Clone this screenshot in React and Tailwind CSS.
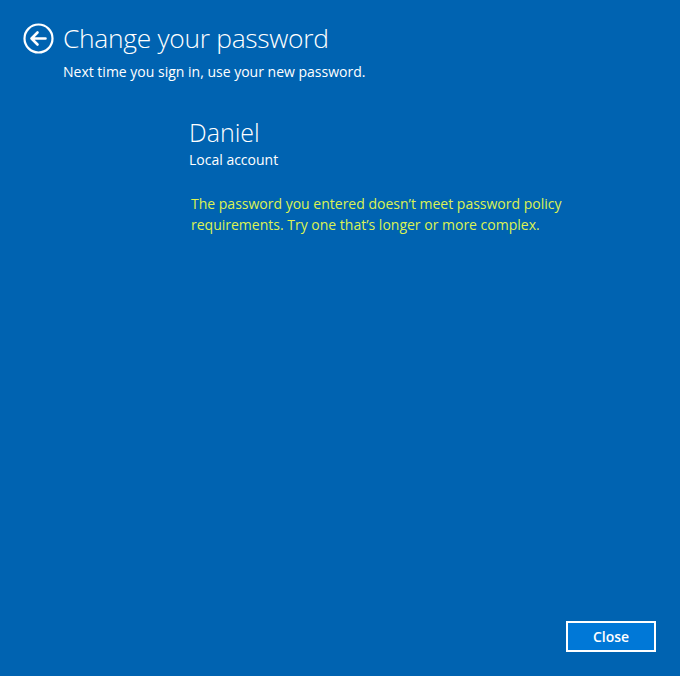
import React from 'react';

const BackIcon = () => (
  <svg width="31" height="31" viewBox="0 0 31 31" fill="none" stroke="white">
    <circle cx="15.5" cy="15.5" r="14" strokeWidth="2.2" />
    <path d="M8.5 15.5h14M14.5 9.5l-6 6 6 6" strokeWidth="2.6" strokeLinecap="round" strokeLinejoin="round" />
  </svg>
);

const App = () => {
  return (
    <div
      className="w-[680px] h-[676px] bg-[#0063b1] text-white flex flex-col"
      style={{ fontFamily: '"Open Sans", "Noto Sans", sans-serif' }}
    >
      <div className="flex items-center gap-[9px] pl-[23px] pt-[22px]">
        <BackIcon />
        <h1 className="text-[26.4px] font-light leading-[32px] tracking-[-0.3px]">Change your password</h1>
      </div>
      <p className="pl-[63px] mt-[8px] text-[14px] leading-[20px]">Next time you sign in, use your new password.</p>

      <div className="pl-[189px] mt-[34px]">
        <div className="text-[25px] font-light leading-[32px]">Daniel</div>
        <div className="text-[14px] leading-[20px] mt-[2px]">Local account</div>
        <p className="mt-[23px] text-[14px] leading-[21px] text-[#dcf253] pl-[2px] w-[400px]">
          The password you entered doesn’t meet password policy requirements. Try one that’s longer or more complex.
        </p>
      </div>

      <div className="mt-auto flex justify-end pr-[24px] pb-[24px]">
        <button className="w-[90px] h-[31px] border-2 border-white bg-[#0078d7] text-[14px] font-semibold leading-none">
          Close
        </button>
      </div>
    </div>
  );
};

export default App;
